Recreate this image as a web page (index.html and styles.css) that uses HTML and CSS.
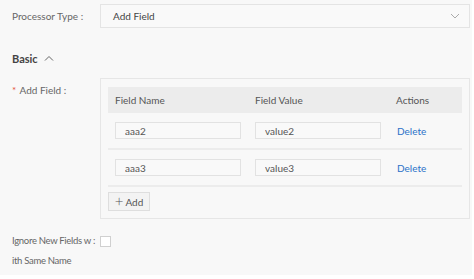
FILE: index.html
```html
<!DOCTYPE html>
<html>
  <head>
    <meta charset="utf-8">
    <meta name="viewport" content="width=device-width, initial-scale=1">
    <title>Add Field processor</title>
    <link rel="stylesheet" href="styles.css">
  </head>
  <body>
    <div class="panel">
      <div class="row row-type">
        <label class="label">Processor Type :</label>
        <div class="select">
          <span>Add Field</span>
          <svg class="chevron" width="10" height="6" viewBox="0 0 10 6"><path d="M1 1l4 4 4-4" fill="none" stroke="#aaa" stroke-width="1"/></svg>
        </div>
      </div>

      <div class="section">
        <span>Basic</span>
        <svg class="caret" width="10" height="6" viewBox="0 0 10 6"><path d="M1 5.5l4-4 4 4" fill="none" stroke="#666" stroke-width="1"/></svg>
      </div>

      <div class="row row-fields">
        <label class="label"><span class="req">*</span> Add Field :</label>
        <div class="fields">
          <div class="thead">
            <div class="cell">Field Name</div>
            <div class="cell">Field Value</div>
            <div class="cell">Actions</div>
          </div>
          <div class="trow">
            <div class="cell"><input class="input" type="text" value="aaa2"></div>
            <div class="cell"><input class="input" type="text" value="value2"></div>
            <div class="cell"><a class="link">Delete</a></div>
          </div>
          <div class="trow">
            <div class="cell"><input class="input" type="text" value="aaa3"></div>
            <div class="cell"><input class="input" type="text" value="value3"></div>
            <div class="cell"><a class="link">Delete</a></div>
          </div>
          <button class="add" type="button"><span class="plus">+</span> Add</button>
        </div>
      </div>

      <div class="row row-ignore">
        <label class="label label-tight">Ignore New Fields w :<br>ith Same Name</label>
        <div><span class="checkbox"></span></div>
      </div>
    </div>
  </body>
</html>
```

FILE: styles.css
```css
body {
  margin: 0;
  background: #ffffff;
  font-family: "Lato", "Open Sans", sans-serif;
  font-size: 10px;
  color: #666;
}

.panel {
  width: 472px;
  height: 275px;
  box-sizing: border-box;
  background: #f8f8f8;
  padding: 4px 2px 0 12px;
}

.row {
  display: grid;
  grid-template-columns: 88px 1fr;
}

.label {
  color: #666;
  line-height: 20px;
  white-space: nowrap;
}

.label-tight {
  font-size: 9.5px;
  letter-spacing: -0.3px;
}

.row-type .label {
  line-height: 25px;
}

.select {
  height: 24px;
  box-sizing: border-box;
  border: 1px solid #e4e4e4;
  background: #f9f9f9;
  display: flex;
  align-items: center;
  justify-content: space-between;
  padding: 0 9px 0 12px;
  color: #444;
}

.section {
  margin-top: 19px;
  height: 20px;
  display: flex;
  align-items: center;
  gap: 6px;
  font-size: 11px;
  font-weight: 700;
  color: #444;
}

.row-fields {
  margin-top: 10px;
}

.row-fields .label {
  padding-top: 2px;
}

.req {
  color: #e5533c;
  margin-right: 1px;
}

.fields {
  border: 1px solid #e6e6e6;
  padding: 8px 7px 7px 7px;
  width: 370px;
  box-sizing: border-box;
}

.thead,
.trow {
  display: grid;
  grid-template-columns: 140px 141px 1fr;
  align-items: center;
}

.thead {
  height: 26px;
  background: #ececec;
  color: #555;
}

.trow {
  height: 35px;
  border-bottom: 2px solid #ececec;
}

.cell {
  padding-left: 7px;
}

.input {
  width: 126px;
  height: 17px;
  box-sizing: border-box;
  border: 1px solid #e2e2e2;
  background: #f9f9f9;
  font: inherit;
  color: #555;
  padding: 0 9px;
}

.link {
  color: #2a72c8;
  margin-left: 1px;
}

.add {
  margin-top: 5px;
  height: 19px;
  width: 42px;
  border: 1px solid #dedede;
  background: #f3f3f3;
  font: inherit;
  color: #555;
  padding: 0;
  display: flex;
  align-items: center;
  justify-content: center;
  gap: 2px;
}

.plus {
  font-size: 15px;
  line-height: 1;
  font-weight: 300;
}

.row-ignore {
  margin-top: 12px;
}

.checkbox {
  display: block;
  width: 9px;
  height: 9px;
  border: 1px solid #d0d0d0;
  background: #fff;
  margin-top: 5px;
}
```
